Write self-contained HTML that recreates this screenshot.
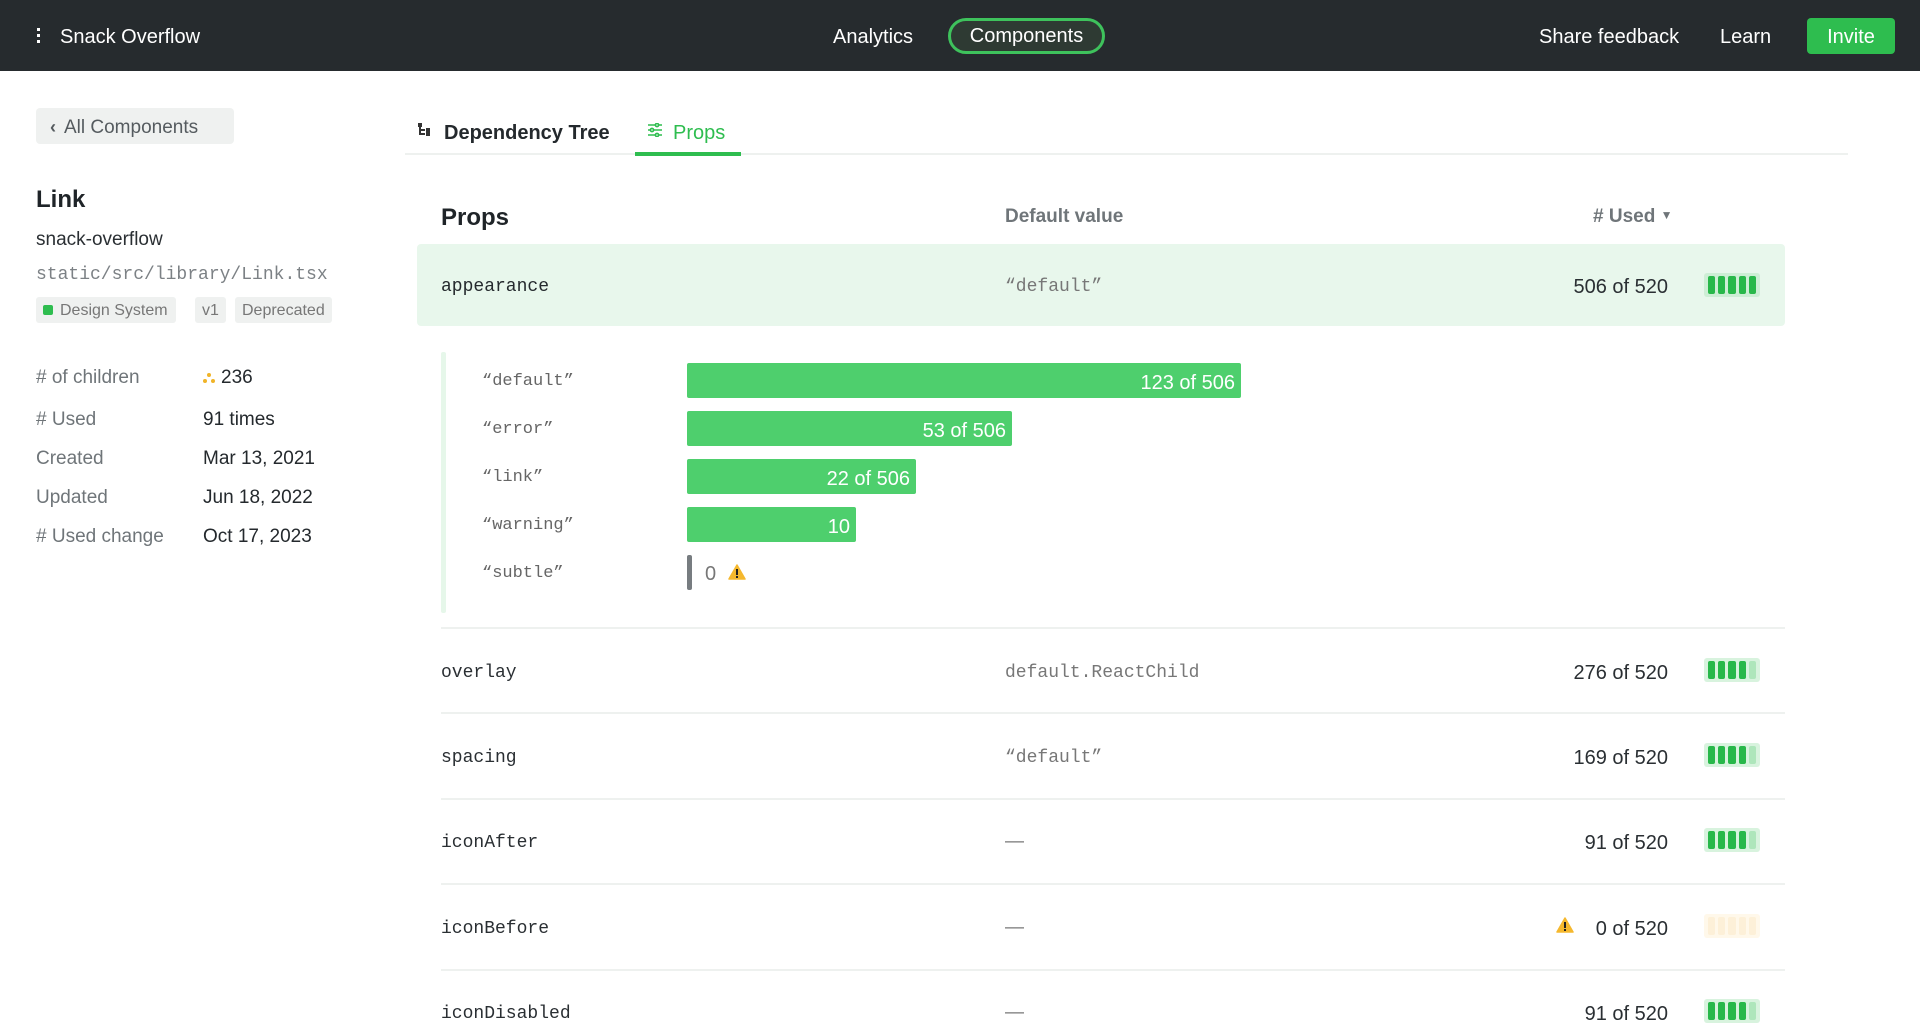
<!DOCTYPE html>
<html><head><meta charset="utf-8"><style>
*{box-sizing:border-box;margin:0;padding:0}
body{width:1920px;height:1029px;overflow:hidden;background:#fff;font-family:"Liberation Sans",sans-serif;color:#2a2f33;position:relative}
.a{position:absolute;white-space:nowrap}
.nav{position:absolute;left:0;top:0;width:1920px;height:71px;background:#262b2e}
.nav .a{color:#fff;font-size:20px;top:26px}
.mono{font-family:"Liberation Mono",monospace}
.lbl{color:#6f7579;font-size:19px}
.val{font-size:19px;color:#24292d}
.sep{position:absolute;left:441px;width:1344px;height:2px;background:#eef1ef}
.meter{position:absolute;width:56px;height:24px;border-radius:3px;background:#d8f3de;padding:3px 4px;display:flex;gap:3px}
.meter i{display:block;width:8px;height:18px;border-radius:2px;background:#28b84a}
.meter i.l{background:#aee6bb}
.bar{position:absolute;left:687px;height:35px;background:#4ecf6d;border-radius:2px;color:#fff;font-size:20px;text-align:right;padding:9px 6px 0 0}
.plbl{position:absolute;left:482px;font-family:"Liberation Mono",monospace;font-size:17px;color:#666}
</style></head><body>
<div class="nav">
  <div class="a" style="left:37px;top:28px;font-size:0">
    <div style="width:3px;height:3px;background:#fff;margin-bottom:3px"></div><div style="width:3px;height:3px;background:#fff;margin-bottom:3px"></div><div style="width:3px;height:3px;background:#fff"></div></div>
  <div class="a" style="left:60px">Snack Overflow</div>
  <div class="a" style="left:833px">Analytics</div>
  <div class="a" style="left:948px;top:18px;width:157px;height:36px;border:3px solid #3ec25c;border-radius:18px;background:#2e3a33;text-align:center;line-height:31px;font-size:20px">Components</div>
  <div class="a" style="left:1539px">Share feedback</div>
  <div class="a" style="left:1720px">Learn</div>
  <div class="a" style="left:1807px;top:18px;width:88px;height:36px;background:#2ebd4f;border-radius:4px;text-align:center;line-height:38px">Invite</div>
</div>

<div class="a" style="left:36px;top:108px;width:198px;height:36px;background:#eff1f0;border-radius:4px;font-size:19px;color:#555b5f;line-height:38px;padding-left:14px"><span style="font-size:18px;font-weight:bold;margin-right:8px">&#8249;</span>All Components</div>

<div class="a" style="left:36px;top:186px;font-size:24px;font-weight:bold;color:#1f2428">Link</div>
<div class="a" style="left:36px;top:229px;font-size:19px">snack-overflow</div>
<div class="a mono" style="left:36px;top:265px;font-size:18px;color:#7c8185">static/src/library/Link.tsx</div>
<div class="a" style="left:36px;top:297px;height:26px;background:#eff1f0;border-radius:3px;font-size:16px;color:#777;line-height:27px;padding:0 8px 0 24px">Design System<span style="position:absolute;left:7px;top:8px;width:10px;height:10px;background:#2ebd4f;border-radius:2px"></span></div>
<div class="a" style="left:195px;top:297px;height:26px;background:#eff1f0;border-radius:3px;font-size:16px;color:#777;line-height:27px;padding:0 7px">v1</div>
<div class="a" style="left:235px;top:297px;height:26px;background:#eff1f0;border-radius:3px;font-size:16px;color:#777;line-height:27px;padding:0 7px">Deprecated</div>

<div class="a lbl" style="left:36px;top:367px"># of children</div>
<svg class="a" style="left:203px;top:373px" width="12" height="10"><circle cx="6" cy="2" r="2" fill="#f0b429"/><circle cx="2" cy="8" r="2" fill="#f0b429"/><circle cx="10" cy="8" r="2" fill="#f0b429"/></svg>
<div class="a val" style="left:221px;top:367px">236</div>
<div class="a lbl" style="left:36px;top:409px"># Used</div><div class="a val" style="left:203px;top:409px">91 times</div>
<div class="a lbl" style="left:36px;top:448px">Created</div><div class="a val" style="left:203px;top:448px">Mar 13, 2021</div>
<div class="a lbl" style="left:36px;top:487px">Updated</div><div class="a val" style="left:203px;top:487px">Jun 18, 2022</div>
<div class="a lbl" style="left:36px;top:526px"># Used change</div><div class="a val" style="left:203px;top:526px">Oct 17, 2023</div>

<div class="a" style="left:405px;top:153px;width:1443px;height:2px;background:#eef1ef"></div>
<svg class="a" style="left:418px;top:123px" width="16" height="14"><rect x="0" y="0" width="4" height="4" fill="#333"/><rect x="1" y="4" width="2" height="8" fill="#333"/><rect x="3" y="6" width="4" height="2" fill="#333"/><rect x="3" y="10" width="4" height="2" fill="#333"/><rect x="8" y="5" width="4" height="4" fill="#333"/><rect x="8" y="9" width="4" height="4" fill="#333"/></svg>
<div class="a" style="left:444px;top:122px;font-size:20px;font-weight:bold;color:#24292d">Dependency Tree</div>
<svg class="a" style="left:647px;top:123px" width="16" height="14" stroke="#2ebd4f" stroke-width="1.6" fill="none"><path d="M1 2h14M1 7h14M1 12h14"/><circle cx="10" cy="2" r="1.6" fill="#fff"/><circle cx="5" cy="7" r="1.6" fill="#fff"/><circle cx="10" cy="12" r="1.6" fill="#fff"/></svg>
<div class="a" style="left:673px;top:122px;font-size:20px;color:#2ebd4f">Props</div>
<div class="a" style="left:635px;top:152px;width:106px;height:4px;background:#2ebd4f"></div>

<div class="a" style="left:441px;top:204px;font-size:24px;font-weight:bold;color:#1f2428">Props</div>
<div class="a" style="left:1005px;top:206px;font-size:19px;font-weight:bold;color:#6f7579">Default value</div>
<div class="a" style="left:1593px;top:206px;font-size:19px;font-weight:bold;color:#6f7579"># Used <span style="font-size:12px;vertical-align:3px">&#9660;</span></div>

<div class="a" style="left:417px;top:244px;width:1368px;height:82px;background:#e8f7ec;border-radius:4px"></div>
<div class="a mono" style="left:441px;top:277px;font-size:18px;color:#24292d">appearance</div>
<div class="a mono" style="left:1005px;top:277px;font-size:18px;color:#777">“default”</div>
<div class="a" style="left:1500px;width:168px;text-align:right;top:276px;font-size:20px">506 of 520</div>
<div class="meter" style="left:1704px;top:273px;background:#cdeed5"><i></i><i></i><i></i><i></i><i></i></div>

<div class="a" style="left:441px;top:352px;width:5px;height:261px;background:#e6f7ea;border-radius:2px"></div>
<div class="plbl" style="top:372px">“default”</div>
<div class="bar" style="top:363px;width:554px">123 of 506</div>
<div class="plbl" style="top:420px">“error”</div>
<div class="bar" style="top:411px;width:325px">53 of 506</div>
<div class="plbl" style="top:468px">“link”</div>
<div class="bar" style="top:459px;width:229px">22 of 506</div>
<div class="plbl" style="top:516px">“warning”</div>
<div class="bar" style="top:507px;width:169px">10</div>
<div class="plbl" style="top:564px">“subtle”</div>
<div class="a" style="left:687px;top:555px;width:5px;height:35px;background:#777c80;border-radius:2px"></div>
<div class="a" style="left:705px;top:563px;font-size:20px;color:#777">0</div>
<svg class="a" style="left:728px;top:564px" width="18" height="16"><path d="M9 1L17 15H1Z" fill="#f5b82e" stroke="#f5b82e" stroke-linejoin="round" stroke-width="1.5"/><rect x="8" y="5" width="2" height="6" fill="#222"/><rect x="8" y="12" width="2" height="2" fill="#222"/></svg>

<div class="sep" style="top:627px"></div>
<div class="a mono" style="left:441px;top:663px;font-size:18px">overlay</div>
<div class="a mono" style="left:1005px;top:663px;font-size:18px;color:#777">default.ReactChild</div>
<div class="a" style="left:1500px;width:168px;text-align:right;top:662px;font-size:20px">276 of 520</div>
<div class="meter" style="left:1704px;top:658px"><i></i><i></i><i></i><i></i><i class="l"></i></div>

<div class="sep" style="top:712px"></div>
<div class="a mono" style="left:441px;top:748px;font-size:18px">spacing</div>
<div class="a mono" style="left:1005px;top:748px;font-size:18px;color:#777">“default”</div>
<div class="a" style="left:1500px;width:168px;text-align:right;top:747px;font-size:20px">169 of 520</div>
<div class="meter" style="left:1704px;top:743px"><i></i><i></i><i></i><i></i><i class="l"></i></div>

<div class="sep" style="top:798px"></div>
<div class="a mono" style="left:441px;top:833px;font-size:18px">iconAfter</div>
<div class="a" style="left:1005px;top:831px;font-size:19px;color:#777">—</div>
<div class="a" style="left:1500px;width:168px;text-align:right;top:832px;font-size:20px">91 of 520</div>
<div class="meter" style="left:1704px;top:828px"><i></i><i></i><i></i><i></i><i class="l"></i></div>

<div class="sep" style="top:883px"></div>
<div class="a mono" style="left:441px;top:919px;font-size:18px">iconBefore</div>
<div class="a" style="left:1005px;top:917px;font-size:19px;color:#777">—</div>
<svg class="a" style="left:1556px;top:917px" width="18" height="16"><path d="M9 1L17 15H1Z" fill="#f5b82e" stroke="#f5b82e" stroke-linejoin="round" stroke-width="1.5"/><rect x="8" y="5" width="2" height="6" fill="#222"/><rect x="8" y="12" width="2" height="2" fill="#222"/></svg>
<div class="a" style="left:1500px;width:168px;text-align:right;top:918px;font-size:20px">0 of 520</div>
<div class="meter" style="left:1704px;top:914px;background:#fff8ea"><i style="background:#fdf0d8"></i><i style="background:#fdf0d8"></i><i style="background:#fdf0d8"></i><i style="background:#fdf0d8"></i><i style="background:#fdf0d8"></i></div>

<div class="sep" style="top:969px"></div>
<div class="a mono" style="left:441px;top:1004px;font-size:18px">iconDisabled</div>
<div class="a" style="left:1005px;top:1002px;font-size:19px;color:#777">—</div>
<div class="a" style="left:1500px;width:168px;text-align:right;top:1003px;font-size:20px">91 of 520</div>
<div class="meter" style="left:1704px;top:999px"><i></i><i></i><i></i><i></i><i class="l"></i></div>
</body></html>
